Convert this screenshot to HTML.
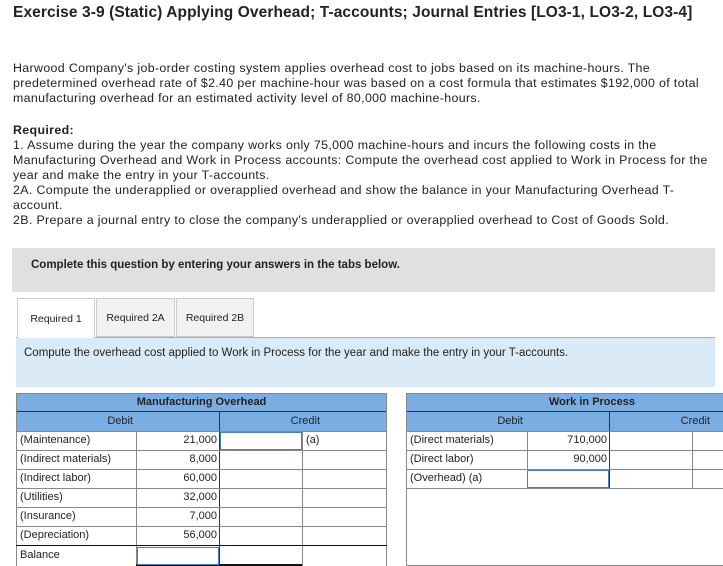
<!DOCTYPE html>
<html><head><style>
*{margin:0;padding:0;box-sizing:border-box}
body{width:723px;height:566px;overflow:hidden;background:#fff;font-family:"Liberation Sans",Arial,sans-serif;color:#222;position:relative}
.a{position:absolute}
.t{font-size:12.4px;line-height:15px;left:13px;width:715px;white-space:nowrap;letter-spacing:0.35px}
.cell{position:absolute;font-size:11px;line-height:19px;white-space:nowrap}
.hl{position:absolute;height:1px;background:#888}
.vl{position:absolute;width:1px;background:#888}
</style></head><body>
<div class="a" style="left:13px;top:4px;font-size:15.5px;font-weight:bold;color:#222;letter-spacing:0.1px">Exercise 3-9 (Static) Applying Overhead; T-accounts; Journal Entries [LO3-1, LO3-2, LO3-4]</div>
<div class="a t" style="top:61px">Harwood Company's job-order costing system applies overhead cost to jobs based on its machine-hours. The<br>predetermined overhead rate of $2.40 per machine-hour was based on a cost formula that estimates $192,000 of total<br>manufacturing overhead for an estimated activity level of 80,000 machine-hours.</div>
<div class="a t" style="top:123px"><b>Required:</b><br>1. Assume during the year the company works only 75,000 machine-hours and incurs the following costs in the<br>Manufacturing Overhead and Work in Process accounts: Compute the overhead cost applied to Work in Process for the<br>year and make the entry in your T-accounts.<br>2A. Compute the underapplied or overapplied overhead and show the balance in your Manufacturing Overhead T-<br>account.<br>2B. Prepare a journal entry to close the company's underapplied or overapplied overhead to Cost of Goods Sold.</div>
<div class="a" style="left:12px;top:248px;width:703px;height:44px;background:#e0e0e0"></div>
<div class="a" style="left:31px;top:259px;font-size:11.5px;font-weight:bold">Complete this question by entering your answers in the tabs below.</div>
<div class="a" style="left:16px;top:337px;width:699px;height:50px;background:#daeaf7;border-top:1px solid #aaa"></div>
<div class="a" style="left:17px;top:298px;width:78px;height:40px;background:#fff;border:1px solid #ccc;border-bottom:none;font-size:10.5px;line-height:40px;text-align:center">Required 1</div>
<div class="a" style="left:96px;top:298px;width:79px;height:39px;background:#f2f2f2;border:1px solid #ccc;font-size:10.5px;line-height:39px;text-align:center">Required 2A</div>
<div class="a" style="left:176px;top:298px;width:78px;height:39px;background:#f2f2f2;border:1px solid #ccc;font-size:10.5px;line-height:39px;text-align:center">Required 2B</div>
<div class="a" style="left:24px;top:347px;font-size:11.5px">Compute the overhead cost applied to Work in Process for the year and make the entry in your T-accounts.</div>

<div class="a" style="left:16px;top:393px;width:371px;height:38px;background:#7aaee3"></div>
<div class="hl" style="left:16px;top:411px;width:371px;background:#333"></div>
<div class="cell" style="left:16px;top:393px;width:371px;text-align:center;font-weight:bold">Manufacturing Overhead</div>
<div class="cell" style="left:16px;top:412px;width:203px;text-align:right;padding-right:86px">Debit</div>
<div class="cell" style="left:219px;top:412px;width:168px;text-align:right;padding-right:67px">Credit</div>
<div class="vl" style="left:16px;top:393px;height:173px"></div>
<div class="vl" style="left:386px;top:393px;height:173px"></div>
<div class="vl" style="left:219px;top:412px;height:154px;background:#333"></div>
<div class="vl" style="left:136px;top:431px;height:135px"></div>
<div class="vl" style="left:302px;top:431px;height:135px"></div>
<div class="hl" style="left:16px;top:393px;width:371px"></div>
<div class="hl" style="left:16px;top:431px;width:371px"></div>
<div class="hl" style="left:16px;top:450px;width:371px"></div>
<div class="hl" style="left:16px;top:469px;width:371px"></div>
<div class="hl" style="left:16px;top:488px;width:371px"></div>
<div class="hl" style="left:16px;top:507px;width:371px"></div>
<div class="hl" style="left:16px;top:526px;width:371px"></div>
<div class="hl" style="left:16px;top:545px;width:371px;background:#111"></div>
<div class="hl" style="left:136px;top:564px;width:166px;height:2px;background:#111"></div>
<div class="cell" style="left:20px;top:431px">(Maintenance)</div>
<div class="cell" style="left:20px;top:450px">(Indirect materials)</div>
<div class="cell" style="left:20px;top:469px">(Indirect labor)</div>
<div class="cell" style="left:20px;top:488px">(Utilities)</div>
<div class="cell" style="left:20px;top:507px">(Insurance)</div>
<div class="cell" style="left:20px;top:526px">(Depreciation)</div>
<div class="cell" style="left:20px;top:546px">Balance</div>
<div class="cell" style="left:137px;top:431px;width:80px;text-align:right">21,000</div>
<div class="cell" style="left:137px;top:450px;width:80px;text-align:right">8,000</div>
<div class="cell" style="left:137px;top:469px;width:80px;text-align:right">60,000</div>
<div class="cell" style="left:137px;top:488px;width:80px;text-align:right">32,000</div>
<div class="cell" style="left:137px;top:507px;width:80px;text-align:right">7,000</div>
<div class="cell" style="left:137px;top:526px;width:80px;text-align:right">56,000</div>
<div class="cell" style="left:306px;top:431px">(a)</div>
<div class="a" style="left:220px;top:432px;width:82px;height:18px;border:1px solid #4a7ebb;background:#fff"></div>
<div class="a" style="left:137px;top:547px;width:82px;height:18px;border:1px solid #4a7ebb;background:#fff"></div>

<div class="a" style="left:406px;top:393px;width:317px;height:38px;background:#7aaee3"></div>
<div class="hl" style="left:406px;top:411px;width:317px;background:#333"></div>
<div class="cell" style="left:527px;top:393px;width:130px;text-align:center;font-weight:bold">Work in Process</div>
<div class="cell" style="left:406px;top:412px;width:203px;text-align:right;padding-right:86px">Debit</div>
<div class="cell" style="left:609px;top:412px;width:114px;text-align:right;padding-right:13px">Credit</div>
<div class="vl" style="left:406px;top:393px;height:173px"></div>
<div class="vl" style="left:609px;top:412px;height:76px;background:#333"></div>
<div class="vl" style="left:527px;top:431px;height:57px"></div>
<div class="vl" style="left:692px;top:431px;height:57px"></div>
<div class="hl" style="left:406px;top:393px;width:317px"></div>
<div class="hl" style="left:406px;top:431px;width:317px"></div>
<div class="hl" style="left:406px;top:450px;width:317px"></div>
<div class="hl" style="left:406px;top:469px;width:317px"></div>
<div class="hl" style="left:406px;top:488px;width:317px"></div>
<div class="hl" style="left:406px;top:565px;width:317px"></div>
<div class="cell" style="left:410px;top:431px">(Direct materials)</div>
<div class="cell" style="left:410px;top:450px">(Direct labor)</div>
<div class="cell" style="left:410px;top:469px">(Overhead) (a)</div>
<div class="cell" style="left:528px;top:431px;width:79px;text-align:right">710,000</div>
<div class="cell" style="left:528px;top:450px;width:79px;text-align:right">90,000</div>
<div class="a" style="left:527px;top:470px;width:82px;height:18px;border:1px solid #4a7ebb;background:#fff"></div>
</body></html>
